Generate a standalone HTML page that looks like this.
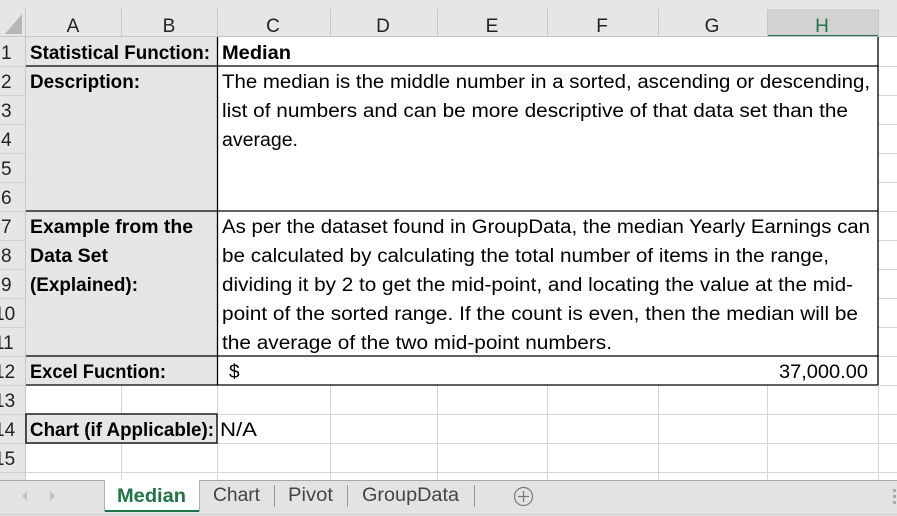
<!DOCTYPE html>
<html><head><meta charset="utf-8"><style>
html,body{margin:0;padding:0;background:#fff;}
svg{display:block;}
text{font-family:"Liberation Sans",sans-serif;}
</style></head><body>
<svg width="897" height="516" viewBox="0 0 897 516" xmlns="http://www.w3.org/2000/svg">
<rect width="897" height="516" fill="#fff"/>
<rect x="0" y="0" width="897" height="37" fill="#e6e6e6"/>
<rect x="767" y="9" width="111" height="28" fill="#d2d2d2"/>
<rect x="767" y="35" width="111" height="2" fill="#217346"/>
<polygon points="22,14 22,34 5,34" fill="#b7b7b7"/>
<g stroke="#c6c6c6" stroke-width="1">
<line x1="25.5" y1="9" x2="25.5" y2="480"/>
<line x1="121.5" y1="9" x2="121.5" y2="37"/><line x1="217.5" y1="9" x2="217.5" y2="37"/>
<line x1="330.5" y1="9" x2="330.5" y2="37"/><line x1="437.5" y1="9" x2="437.5" y2="37"/>
<line x1="547.5" y1="9" x2="547.5" y2="37"/><line x1="658.5" y1="9" x2="658.5" y2="37"/>
<line x1="767.5" y1="9" x2="767.5" y2="37"/><line x1="878.5" y1="9" x2="878.5" y2="37"/>
<line x1="0" y1="36.5" x2="897" y2="36.5"/>
</g>
<g font-size="19" fill="#222" text-anchor="middle">
<text x="73" y="32">A</text><text x="169" y="32">B</text><text x="273" y="32">C</text><text x="383" y="32">D</text><text x="492" y="32">E</text><text x="602" y="32">F</text><text x="712" y="32">G</text><text x="822" y="32" fill="#217346">H</text>
</g>
<rect x="0" y="37" width="25" height="443" fill="#e6e6e6"/>
<g stroke="#d0d0d0">
<line x1="0" y1="66.5" x2="25" y2="66.5"/><line x1="0" y1="95.5" x2="25" y2="95.5"/><line x1="0" y1="124.5" x2="25" y2="124.5"/><line x1="0" y1="153.5" x2="25" y2="153.5"/><line x1="0" y1="182.5" x2="25" y2="182.5"/><line x1="0" y1="211.5" x2="25" y2="211.5"/><line x1="0" y1="240.5" x2="25" y2="240.5"/><line x1="0" y1="269.5" x2="25" y2="269.5"/><line x1="0" y1="298.5" x2="25" y2="298.5"/><line x1="0" y1="327.5" x2="25" y2="327.5"/><line x1="0" y1="356.5" x2="25" y2="356.5"/><line x1="0" y1="385.5" x2="25" y2="385.5"/><line x1="0" y1="414.5" x2="25" y2="414.5"/><line x1="0" y1="443.5" x2="25" y2="443.5"/><line x1="0" y1="472.5" x2="25" y2="472.5"/>
</g>
<g font-size="19" fill="#222">
<text x="1" y="59">1</text><text x="1" y="88">2</text><text x="1" y="117">3</text><text x="1" y="146">4</text><text x="1" y="175">5</text><text x="1" y="204">6</text><text x="1" y="233">7</text><text x="1" y="262">8</text><text x="1" y="291">9</text><text x="-6" y="320">10</text><text x="-6" y="349">11</text><text x="-6" y="378">12</text><text x="-6" y="407">13</text><text x="-6" y="436">14</text><text x="-6" y="465">15</text>
</g>
<g stroke="#d4d4d4">
<line x1="330.5" y1="385" x2="330.5" y2="480"/><line x1="437.5" y1="385" x2="437.5" y2="480"/><line x1="547.5" y1="385" x2="547.5" y2="480"/><line x1="658.5" y1="385" x2="658.5" y2="480"/><line x1="767.5" y1="385" x2="767.5" y2="480"/><line x1="878.5" y1="385" x2="878.5" y2="480"/>
<line x1="121.5" y1="385" x2="121.5" y2="480"/><line x1="217.5" y1="385" x2="217.5" y2="480"/>
<line x1="26" y1="414.5" x2="897" y2="414.5"/><line x1="26" y1="443.5" x2="897" y2="443.5"/><line x1="26" y1="472.5" x2="897" y2="472.5"/>
<line x1="878" y1="66.5" x2="897" y2="66.5"/><line x1="878" y1="95.5" x2="897" y2="95.5"/><line x1="878" y1="124.5" x2="897" y2="124.5"/><line x1="878" y1="153.5" x2="897" y2="153.5"/><line x1="878" y1="182.5" x2="897" y2="182.5"/><line x1="878" y1="211.5" x2="897" y2="211.5"/><line x1="878" y1="240.5" x2="897" y2="240.5"/><line x1="878" y1="269.5" x2="897" y2="269.5"/><line x1="878" y1="298.5" x2="897" y2="298.5"/><line x1="878" y1="327.5" x2="897" y2="327.5"/><line x1="878" y1="356.5" x2="897" y2="356.5"/><line x1="878" y1="385.5" x2="897" y2="385.5"/>
</g>
<rect x="26" y="37" width="191" height="348" fill="#e7e6e6"/>
<rect x="26" y="414" width="191" height="29" fill="#e7e6e6"/>
<g stroke="#000" stroke-width="1.3" fill="none">
<line x1="217.5" y1="37" x2="217.5" y2="385"/>
<line x1="878" y1="37" x2="878" y2="385"/>
<line x1="26" y1="66" x2="878" y2="66"/>
<line x1="26" y1="211" x2="878" y2="211"/>
<line x1="26" y1="356" x2="878" y2="356"/>
<line x1="26" y1="385" x2="878" y2="385"/>
<rect x="26" y="414" width="191" height="29"/>
</g>
<g font-size="19" font-weight="bold" fill="#000">
<text x="30" y="59" textLength="180" lengthAdjust="spacingAndGlyphs">Statistical Function:</text>
<text x="222" y="59" textLength="69" lengthAdjust="spacingAndGlyphs">Median</text>
<text x="30" y="88" textLength="110" lengthAdjust="spacingAndGlyphs">Description:</text>
<text x="30" y="233" textLength="163" lengthAdjust="spacingAndGlyphs">Example from the</text>
<text x="30" y="262" textLength="78" lengthAdjust="spacingAndGlyphs">Data Set</text>
<text x="30" y="291" textLength="108" lengthAdjust="spacingAndGlyphs">(Explained):</text>
<text x="30" y="378" textLength="136" lengthAdjust="spacingAndGlyphs">Excel Fucntion:</text>
<text x="30" y="436" textLength="184" lengthAdjust="spacingAndGlyphs">Chart (if Applicable):</text>
</g>
<g font-size="19" fill="#000">
<text x="222" y="88" textLength="648" lengthAdjust="spacingAndGlyphs">The median is the middle number in a sorted, ascending or descending,</text>
<text x="222" y="117" textLength="626" lengthAdjust="spacingAndGlyphs">list of numbers and can be more descriptive of that data set than the</text>
<text x="222" y="146" textLength="76" lengthAdjust="spacingAndGlyphs">average.</text>
<text x="222" y="233" textLength="648" lengthAdjust="spacingAndGlyphs">As per the dataset found in GroupData, the median Yearly Earnings can</text>
<text x="222" y="262" textLength="607" lengthAdjust="spacingAndGlyphs">be calculated by calculating the total number of items in the range,</text>
<text x="222" y="291" textLength="631" lengthAdjust="spacingAndGlyphs">dividing it by 2 to get the mid-point, and locating the value at the mid-</text>
<text x="222" y="320" textLength="636" lengthAdjust="spacingAndGlyphs">point of the sorted range. If the count is even, then the median will be</text>
<text x="222" y="349" textLength="390" lengthAdjust="spacingAndGlyphs">the average of the two mid-point numbers.</text>
<text x="229" y="378">$</text>
<text x="779" y="378" textLength="89" lengthAdjust="spacingAndGlyphs">37,000.00</text>
<text x="220" y="436" textLength="37" lengthAdjust="spacingAndGlyphs">N/A</text>
</g>
<rect x="0" y="480" width="897" height="36" fill="#e3e3e3"/>
<line x1="0" y1="480.5" x2="897" y2="480.5" stroke="#a8a8a8"/>
<line x1="0" y1="514.5" x2="897" y2="514.5" stroke="#d0d0d0"/>
<polygon points="27,491 22,496 27,501" fill="#c4c4c4"/>
<polygon points="50,491 55,496 50,501" fill="#c4c4c4"/>
<rect x="104" y="480" width="96" height="32" fill="#fff"/>
<rect x="104" y="510" width="96" height="2" fill="#217346"/>
<line x1="104.5" y1="480" x2="104.5" y2="512" stroke="#b0b0b0"/>
<line x1="199.5" y1="480" x2="199.5" y2="512" stroke="#b0b0b0"/>
<text x="117" y="502" font-size="19" font-weight="bold" fill="#217346" textLength="69" lengthAdjust="spacingAndGlyphs">Median</text>
<g font-size="19" fill="#444">
<text x="213" y="501" textLength="47" lengthAdjust="spacingAndGlyphs">Chart</text>
<text x="288" y="501" textLength="45" lengthAdjust="spacingAndGlyphs">Pivot</text>
<text x="362" y="501" textLength="97" lengthAdjust="spacingAndGlyphs">GroupData</text>
</g>
<g stroke="#9a9a9a"><line x1="274.5" y1="485" x2="274.5" y2="507"/><line x1="347.5" y1="485" x2="347.5" y2="507"/><line x1="474.5" y1="485" x2="474.5" y2="507"/></g>
<circle cx="523.5" cy="496.5" r="9" fill="none" stroke="#777" stroke-width="1.2"/>
<line x1="518" y1="496.5" x2="529" y2="496.5" stroke="#777" stroke-width="1.2"/>
<line x1="523.5" y1="491" x2="523.5" y2="502" stroke="#777" stroke-width="1.2"/>
<rect x="893" y="489" width="3" height="3" fill="#aaa"/><rect x="893" y="495" width="3" height="3" fill="#aaa"/><rect x="893" y="501" width="3" height="3" fill="#aaa"/>
</svg>
</body></html>
